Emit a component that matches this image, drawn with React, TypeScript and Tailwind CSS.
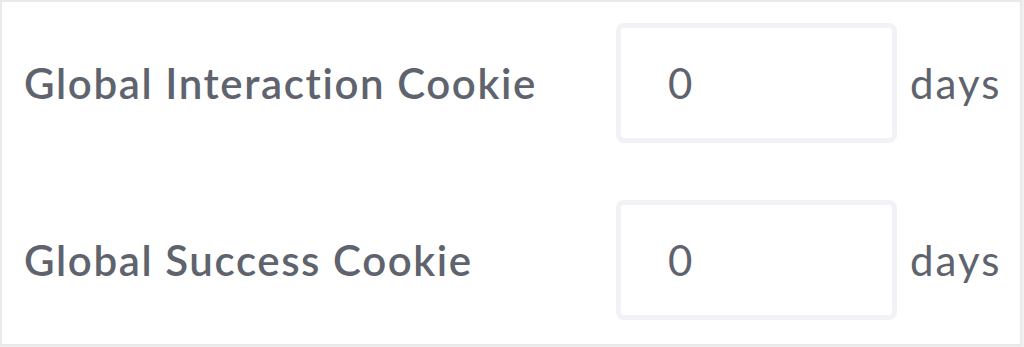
import React from "react";

const rows = [
  { label: "Global Interaction Cookie", value: "0" },
  { label: "Global Success Cookie", value: "0" },
];

const App: React.FC = () => {
  return (
    <div className="w-[1024px] h-[347px] bg-[#f0f0f0]">
      <div
        className="w-[1022px] h-[346px] bg-white border-2 border-[#e9e9e9] flex flex-col gap-[57px] pt-[21px]"
        style={{ fontFamily: "Lato, 'Open Sans', sans-serif" }}
      >
        {rows.map((r) => (
          <div key={r.label} className="flex items-center">
            <label className="w-[614px] pl-[22px] text-[42px] font-semibold tracking-[1.6px] text-[#5e636d]">
              {r.label}
            </label>
            <div className="w-[281px] h-[120px] border-[5px] border-[#f1f2f6] rounded-[8px] flex items-center pl-[47px]">
              <span className="text-[42px] text-[#5e636d]">{r.value}</span>
            </div>
            <span className="ml-[13px] text-[42px] tracking-[2px] text-[#5e636d]">days</span>
          </div>
        ))}
      </div>
    </div>
  );
};

export default App;
